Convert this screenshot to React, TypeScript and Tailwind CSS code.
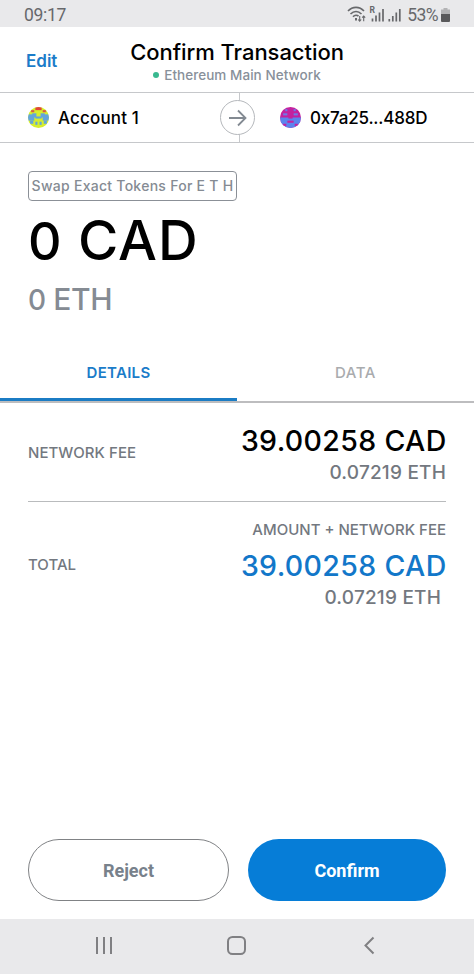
import { useState } from 'react';
import clsx from 'clsx';

interface Pixel {
  x: number;
  y: number;
  w: number;
  h: number;
  color: string;
}

interface AvatarProps {
  base: string;
  pixels: Pixel[];
}

interface FeeAmountProps {
  primary: string;
  secondary: string;
  highlighted?: boolean;
}

const SENDER_PIXELS: Pixel[] = [
  { x: 7, y: 0, w: 6, h: 3, color: '#e0453a' },
  { x: 3, y: 3, w: 3, h: 2, color: '#d8564a' },
  { x: 14, y: 3, w: 3, h: 2, color: '#d8564a' },
  { x: 0, y: 7, w: 6, h: 6, color: '#62a5dc' },
  { x: 14, y: 7, w: 6, h: 6, color: '#62a5dc' },
  { x: 4, y: 6, w: 4, h: 4, color: '#62a5dc' },
  { x: 12, y: 6, w: 4, h: 4, color: '#62a5dc' },
  { x: 7, y: 9, w: 6, h: 2, color: '#62a5dc' },
  { x: 2, y: 13, w: 3, h: 3, color: '#62a5dc' },
  { x: 15, y: 13, w: 3, h: 3, color: '#62a5dc' },
  { x: 7, y: 14, w: 2, h: 3, color: '#62a5dc' },
  { x: 11, y: 14, w: 2, h: 3, color: '#62a5dc' },
];

const RECIPIENT_PIXELS: Pixel[] = [
  { x: 5, y: 2, w: 2, h: 2, color: '#6f78ea' },
  { x: 13, y: 2, w: 2, h: 2, color: '#6f78ea' },
  { x: 3, y: 6, w: 4, h: 2, color: '#6f78ea' },
  { x: 13, y: 6, w: 4, h: 2, color: '#6f78ea' },
  { x: 0, y: 10, w: 20, h: 10, color: '#5b83ee' },
  { x: 8, y: 9, w: 4, h: 2, color: '#c4219f' },
  { x: 7, y: 13, w: 6, h: 2, color: '#c4219f' },
  { x: 3, y: 16, w: 3, h: 2, color: '#c4219f' },
  { x: 14, y: 16, w: 3, h: 2, color: '#c4219f' },
];

function Avatar({ base, pixels }: AvatarProps) {
  return (
    <svg viewBox="0 0 20 20" className="size-[21px] shrink-0 rounded-full">
      <rect width="20" height="20" fill={base} />
      {pixels.map((p, idx) => (
        <rect key={idx} x={p.x} y={p.y} width={p.w} height={p.h} fill={p.color} />
      ))}
    </svg>
  );
}

function StatusBar() {
  return (
    <div className="flex h-[27px] shrink-0 items-center justify-between bg-[#e9e9eb] pt-[3px] pr-[24px] pl-[24px] font-[Roboto,sans-serif] text-[#67686b]">
      <span className="text-[17.5px] leading-6 tracking-[-0.3px]">09:17</span>
      <div className="flex items-center">
        <svg width="60" height="20" viewBox="0 0 60 20" fill="none" stroke="#67686b" strokeWidth="1.6">
          {/* Wifi with traffic arrows */}
          <path d="M1 6C5.500 1.200 12.500 1.200 17 6M3.500 9c3.300-3.200 7.700-3.200 11 0M6 11.700c1.700-1.700 4.200-1.700 5.500-.5" />
          <path d="M9 13v2.500" strokeWidth="2" />
          <path d="M12.700 11v5M11.200 14.500l1.500 1.700 1.500-1.700M16.700 16.200V11M15.200 12.700l1.500-1.700 1.500 1.700" strokeWidth="1.1" />
          {/* Roaming SIM, then second SIM */}
          <text x="22.500" y="8" fontSize="8.500" fontWeight="700" fill="#67686b" stroke="none">R</text>
          <path d="M25.500 13.500v3M29 10.500v6M32.500 7.500v9M36 4v12.500" strokeWidth="1.700" />
          <path d="M42.300 14v2.500M45.800 11v5.500M49.300 7.500v9M52.800 4v12.500" strokeWidth="1.700" />
        </svg>
        <span className="text-[17.5px] leading-6 tracking-[-0.6px]">53%</span>
        <svg width="9" height="14" viewBox="0 0 9 14" className="ml-[3px]">
          <path d="M2.500 0h4v1.500H9V7H0V1.500h2.500z" fill="#b3b3b5" />
          <path d="M0 6h9v7a1 1 0 0 1-1 1H1a1 1 0 0 1-1-1z" fill="#59595b" />
        </svg>
      </div>
    </div>
  );
}

function Header() {
  return (
    <header className="relative h-[66px] shrink-0 border-b border-[#c6c8cb] bg-white text-center">
      <button className="absolute top-[22px] left-[26px] text-[17px] leading-6 font-semibold text-[#1b7cc9]">
        Edit
      </button>
      <h1 className="pt-[11px] text-[22px] leading-7 font-medium tracking-[-0.05px] text-black">Confirm Transaction</h1>
      <div className="flex items-center justify-center gap-[5px] text-[13.5px] leading-[18px] font-medium tracking-[0.05px] text-[#88909a]">
        <span className="size-1.5 rounded-full bg-[#39b990]" />
        Ethereum Main Network
      </div>
    </header>
  );
}

function AccountBar() {
  return (
    <section className="relative flex h-[50px] shrink-0 border-b border-[#c6c8cb] text-[17px] font-medium text-black">
      <div className="flex w-[240px] items-center gap-[9px] border-r border-[#c6c8cb] pl-[28px]">
        <Avatar base="#d6ee2c" pixels={SENDER_PIXELS} />
        <span className="pt-[2px] tracking-[0.15px]">Account 1</span>
      </div>
      <div className="flex flex-1 items-center gap-[9px] pl-[40px]">
        <Avatar base="#c4219f" pixels={RECIPIENT_PIXELS} />
        <span className="pt-[2px] tracking-[-0.2px]">0x7a25...488D</span>
      </div>
      <div className="absolute top-[7px] left-[220px] flex size-[35px] items-center justify-center rounded-full border border-[#b5b8bc] bg-white">
        <svg width="20" height="18" viewBox="0 0 20 18" fill="none" stroke="#838a92" strokeWidth="1.8">
          <path d="M1 9h16.500M10 1.500 17.500 9 10 16.500" />
        </svg>
      </div>
    </section>
  );
}

function FeeAmount({ primary, secondary, highlighted }: FeeAmountProps) {
  return (
    <div className="flex flex-col items-end">
      <span
        className={clsx(
          'mr-[-0.6px] text-[28.5px] leading-8 font-medium tracking-[0.35px]',
          highlighted ? 'text-[#1277c9]' : 'text-black',
        )}
      >
        {primary}
      </span>
      <span
        className={clsx(
          'text-[19px] leading-[32px] font-medium tracking-[0.2px] text-[#737880]',
          highlighted && 'mr-[5px]',
        )}
      >
        {secondary}
      </span>
    </div>
  );
}

function NavigationBar() {
  return (
    <nav className="flex h-[55px] shrink-0 items-center bg-[#e9e9eb] text-[#808083]">
      <svg width="474" height="55" viewBox="0 0 474 55" fill="none" stroke="currentColor" strokeWidth="2">
        <path d="M97 18v17M104 18v17M111 18v17" />
        <rect x="228" y="18" width="17" height="17" rx="4.500" />
        <path d="M373.500 18.500 365.500 26.500 373.500 34.500" />
      </svg>
    </nav>
  );
}

export default function App() {
  const [tab, setTab] = useState('details');

  return (
    <div className="flex h-[974px] w-[474px] flex-col overflow-hidden bg-white font-[Inter,sans-serif]">
      <StatusBar />
      <Header />
      <AccountBar />

      <section className="flex h-[203px] shrink-0 flex-col items-start px-[28px] pt-[28px]">
        <div className="flex h-[30px] w-[209px] items-center justify-center rounded-[4px] border border-[#8b9097] pb-[2px] text-[14px] font-medium tracking-[0.27px] whitespace-nowrap text-[#858b93]">
          Swap Exact Tokens For E T H
        </div>
        <p className="mt-[7px] text-[55px] leading-[64px] font-medium tracking-[0.9px] text-black">
          <span className="text-[52px]">0</span> CAD
        </p>
        <p className="mt-[5px] text-[30px] leading-10 font-medium tracking-[-0.4px] text-[#858b93]">
          <span className="text-[28px]">0</span> ETH
        </p>
      </section>

      <div className="flex h-[57px] shrink-0 border-b-2 border-[#bdbdbf] text-[15px] font-medium">
        <button
          className={clsx(
            'flex-1 border-b-[3px] pt-[3px] tracking-[0.3px]',
            tab === 'details' ? 'border-[#1b7cc4] font-semibold text-[#1b7cc9]' : 'border-transparent text-[#a9abae]',
          )}
          onClick={() => setTab('details')}
        >
          DETAILS
        </button>
        <button
          className={clsx(
            'flex-1 border-b-[3px] pt-[3px] tracking-[0.6px]',
            tab === 'data' ? 'border-[#1b7cc4] font-semibold text-[#1b7cc9]' : 'border-transparent text-[#a9abae]',
          )}
          onClick={() => setTab('data')}
        >
          DATA
        </button>
      </div>

      <main className="flex flex-1 flex-col px-[28px] text-[#737880]">
        <div className="flex h-[99px] items-center justify-between border-b border-[#b9bbbd]">
          <span className="pt-[2px] text-[15px] font-medium tracking-[0.05px]">NETWORK FEE</span>
          <div className="pt-[9px]">
            <FeeAmount primary="39.00258 CAD" secondary="0.07219 ETH" />
          </div>
        </div>
        <div className="flex h-[126px] items-center justify-between">
          <span className="pt-[1px] text-[15px] font-medium">TOTAL</span>
          <div className="flex flex-col items-end pt-[2px]">
            <span className="pb-[8px] text-[15px] leading-6 font-medium">AMOUNT + NETWORK FEE</span>
            <FeeAmount primary="39.00258 CAD" secondary="0.07219 ETH" highlighted />
          </div>
        </div>
      </main>

      <div className="flex h-[80px] shrink-0 gap-[19px] px-[28px] font-[Roboto,sans-serif] text-[18px] font-bold">
        <button className="h-[62px] w-[201px] rounded-full border border-[#808285] text-[#78818b]">Reject</button>
        <button className="h-[62px] flex-1 rounded-full bg-[#067dd7] text-white">Confirm</button>
      </div>
      <NavigationBar />
    </div>
  );
}
